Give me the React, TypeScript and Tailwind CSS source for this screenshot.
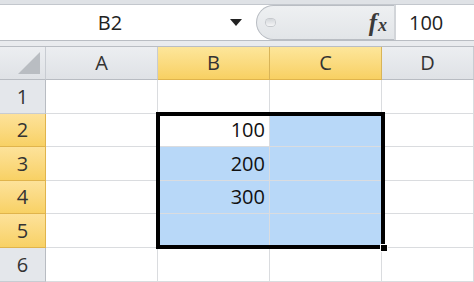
import React from 'react'

const font = { fontFamily: '"Open Sans", "Liberation Sans", sans-serif' }

const cols = ['A', 'B', 'C', 'D']
const rowHeights = ['h-[34px]', 'h-[33px]', 'h-[34px]', 'h-[33px]', 'h-[34px]', 'h-[34px]']
const values: Record<number, string> = { 2: '100', 3: '200', 4: '300' }

function ColHeader({ label, active }: { label: string; active: boolean }) {
  return (
    <div
      className={
        active
          ? 'flex items-center justify-center border-r border-b border-r-[#d8b458] border-b-[#e0b44c] bg-gradient-to-b from-[#fde69a] to-[#f8d062] text-[20px] text-[#333]'
          : 'flex items-center justify-center border-r border-b border-r-[#c8ccd2] border-b-[#b8bcc2] bg-gradient-to-b from-[#eceef1] to-[#dfe2e6] text-[20px] text-[#333]'
      }
    >
      {label}
    </div>
  )
}

function RowHeader({ n, active, h }: { n: number; active: boolean; h: string }) {
  return (
    <div
      className={
        (active
          ? 'border-b border-r border-b-[#e0b44c] border-r-[#e0b44c] bg-gradient-to-b from-[#fde29a] to-[#f8d164] '
          : 'border-b border-r border-b-[#c8ccd2] border-r-[#b8bcc2] bg-[#e4e7eb] ') +
        h +
        ' flex items-center justify-center text-[20px] text-[#333]'
      }
    >
      {n}
    </div>
  )
}

export default function App() {
  return (
    <div className="h-[282px] w-[474px] overflow-hidden bg-white" style={font}>
      {/* formula bar */}
      <div className="h-[5px] border-b border-[#c3c7cd] bg-[#dfe2e6]" />
      <div className="flex h-[35px] bg-white">
        <div className="relative flex w-[256px] items-center">
          <span className="flex-1 pr-[10px] text-center text-[20px] text-[#222]">B2</span>
          <span className="mr-[14px] h-0 w-0 border-x-[6px] border-t-[7px] border-x-transparent border-t-[#222]" />
        </div>
        <div className="relative flex w-[138px] items-center rounded-l-[18px] border border-r-0 border-[#b9bdc3] bg-gradient-to-b from-[#eef0f2] to-[#e2e5e8]">
          <span className="ml-[9px] h-[7px] w-[9px] rounded-full bg-gradient-to-b from-[#d4d7db] to-[#f4f5f6] shadow-[0_0_0_1px_#c6c9cd]" />
          <span
            className="ml-auto mr-[7px] text-[25px] font-bold italic leading-none text-[#3a3a3a]"
            style={{ fontFamily: '"Liberation Serif", serif' }}
          >
            f<span className="ml-[1px] text-[18px]">x</span>
          </span>
        </div>
        <div className="flex flex-1 items-center border-l-2 border-[#d2d5d9] pl-[13px] text-[20px] text-[#222]">100</div>
      </div>
      <div className="h-[7px] border-y border-[#b9bdc3] bg-[#e9ebee]" />

      {/* sheet */}
      <div className="relative">
        <div className="grid grid-cols-[46px_112px_112px_112px_92px]">
          <div className="relative h-[33px] border-b border-r border-b-[#b8bcc2] border-r-[#c8ccd2] bg-gradient-to-b from-[#eceef1] to-[#dfe2e6]">
            <svg className="absolute right-[5px] bottom-[5px]" width="22" height="22" viewBox="0 0 22 22">
              <polygon points="22,0 22,22 0,22" fill="#b9bdc2" />
            </svg>
          </div>
          {cols.map((c) => (
            <ColHeader key={c} label={c} active={c === 'B' || c === 'C'} />
          ))}

          {rowHeights.map((h, i) => {
            const r = i + 1
            const sel = r >= 2 && r <= 5
            return (
              <React.Fragment key={r}>
                <RowHeader n={r} active={sel} h={h} />
                {cols.map((c) => {
                  const inSel = sel && (c === 'B' || c === 'C')
                  const bg = inSel && !(c === 'B' && r === 2) ? 'bg-[#b8d8f8]' : 'bg-white'
                  return (
                    <div
                      key={c}
                      className={
                        h +
                        ' ' +
                        bg +
                        ' flex items-center justify-end border-b border-r border-[#dadcdf] pr-[4px] text-[20px] text-[#111]'
                      }
                    >
                      {c === 'B' ? values[r] : ''}
                    </div>
                  )
                })}
              </React.Fragment>
            )
          })}
        </div>

        {/* selection outline */}
        <div className="pointer-events-none absolute left-[156px] top-[65px] h-[137px] w-[229px] border-[4px] border-black" />
        <div className="absolute left-[380px] top-[197px] h-[8px] w-[8px] border border-white bg-black" />
      </div>
    </div>
  )
}
